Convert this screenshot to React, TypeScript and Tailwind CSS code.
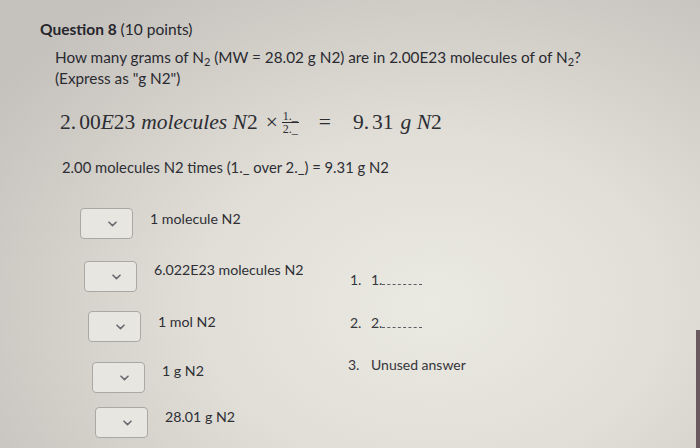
import React from "react";

const rows = [
  { label: "1 molecule N2", ml: "ml-[80px]", mt: "mt-[0px]", lt: "mt-[1px]" },
  { label: "6.022E23 molecules N2", ml: "ml-[84px]", mt: "mt-[22px]", lt: "-mt-[1px]" },
  { label: "1 mol N2", ml: "ml-[88px]", mt: "mt-[19px]", lt: "mt-[1px]" },
  { label: "1 g N2", ml: "ml-[92px]", mt: "mt-[20px]", lt: "-mt-[1px]" },
  { label: "28.01 g N2", ml: "ml-[95px]", mt: "mt-[14px]", lt: "mt-[0px]" },
];

function SelectBox() {
  return (
    <div className="w-[53px] h-[31px] rounded-[4px] border border-[#a9a8a3] bg-[#e7e6e1] flex items-center justify-end pr-[15px] shrink-0">
      <svg width="9" height="6" viewBox="0 0 9 6" fill="none">
        <path d="M1 1.2 L4.5 4.6 L8 1.2" stroke="#6a6a70" strokeWidth="1.6" strokeLinecap="round" strokeLinejoin="round" />
      </svg>
    </div>
  );
}

export default function App() {
  return (
    <div
      className="relative w-[700px] h-[448px] overflow-hidden text-[#26262c] bg-[radial-gradient(ellipse_75%_85%_at_62%_68%,#ebeae2_0%,#e0ded6_45%,#cfccc6_80%,#c5c2be_100%)]"
      style={{ fontFamily: "Lato, 'Open Sans', sans-serif" }}
    >
      <div className="pt-[19px] pl-[40px] text-[15.5px] leading-[20px]">
        <span className="font-bold">Question 8</span> <span>(10 points)</span>
      </div>
      <div className="pl-[55px] pt-[8px] text-[15.3px] leading-[21px] text-[#2a2a31]">
        <div>
          How many grams of N<sub className="text-[11px]">2</sub> (MW = 28.02 g N2) are in 2.00E23 molecules of of N<sub className="text-[11px]">2</sub>?
        </div>
        <div>(Express as "g N2")</div>
      </div>
      <div
        className="pl-[60px] pt-[16px] h-[50px] flex items-center text-[21.5px] text-[#2c2c33]"
        style={{ fontFamily: "'Liberation Serif', 'DejaVu Serif', serif" }}
      >
        <span>2.</span>
        <span className="ml-[3px]">00</span>
        <span className="italic">E</span>
        <span>23</span>
        <span className="italic ml-[6px]">molecules N</span>
        <span>2</span>
        <span className="ml-[8px]">×</span>
        <span className="inline-flex flex-col items-center ml-[4px] mr-[8px] text-[12px] leading-[12px]">
          <span className="border-b border-[#2c2c33] px-[1px]">1._</span>
          <span>2._</span>
        </span>
        <span className="ml-[12px]">=</span>
        <span className="ml-[22px]">9.</span>
        <span className="ml-[3px]">31</span>
        <span className="italic ml-[7px]">g N</span>
        <span>2</span>
      </div>
      <div className="pl-[62px] pt-[18px] text-[14.8px] leading-[20px] text-[#2e2e35]">
        2.00 molecules N2 times (1._ over 2._) = 9.31 g N2
      </div>
      <div className="flex pt-[31px]">
        <div className="flex flex-col w-[340px]">
          {rows.map((r, i) => (
            <div key={i} className={`flex items-start ${r.ml} ${r.mt}`}>
              <SelectBox />
              <div className={`ml-[17px] ${r.lt} text-[14.2px] leading-[20px] text-[#2e2e35] whitespace-nowrap`}>{r.label}</div>
            </div>
          ))}
        </div>
        <div className="flex flex-col pt-[62px] text-[14px] leading-[20px] text-[#35353c]">
          <div className="flex ml-[10px]">
            <span className="w-[21px]">1.</span>
            <span>1.</span>
            <span className="w-[40px] border-b border-dashed border-[#5c5c62] mb-[5px]" />
          </div>
          <div className="flex ml-[10px] mt-[23px]">
            <span className="w-[21px]">2.</span>
            <span>2.</span>
            <span className="w-[40px] border-b border-dashed border-[#5c5c62] mb-[5px]" />
          </div>
          <div className="flex ml-[8px] mt-[22px]">
            <span className="w-[23px]">3.</span>
            <span>Unused answer</span>
          </div>
        </div>
      </div>
      <div className="absolute right-0 top-[330px] bottom-0 w-[4px] bg-[#6a5a60]" />
    </div>
  );
}
